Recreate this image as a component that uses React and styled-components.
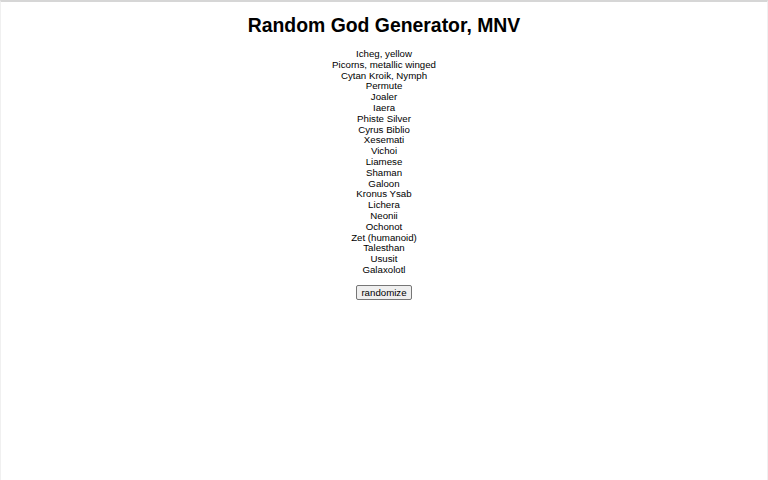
import React, { useState } from "react";
import styled, { createGlobalStyle } from "styled-components";

const GlobalStyle = createGlobalStyle`
  html, body {
    margin: 0;
    padding: 0;
    background: #ffffff;
  }
  body {
    font-family: "Liberation Sans", Arial, sans-serif;
    color: #000000;
  }
`;

const GODS = [
  "Icheg, yellow",
  "Picorns, metallic winged",
  "Cytan Kroik, Nymph",
  "Permute",
  "Joaler",
  "Iaera",
  "Phiste Silver",
  "Cyrus Biblio",
  "Xesemati",
  "Vichoi",
  "Liamese",
  "Shaman",
  "Galoon",
  "Kronus Ysab",
  "Lichera",
  "Neonii",
  "Ochonot",
  "Zet (humanoid)",
  "Talesthan",
  "Ususit",
  "Galaxolotl",
];

const App = () => {
  const [gods, setGods] = useState(GODS);

  const randomize = () => {
    setGods([...gods].sort(() => Math.random() - 0.5));
  };

  return (
    <>
      <GlobalStyle />
      <Frame>
        <Title>Random God Generator, MNV</Title>
        <GodList>
          {gods.map((g) => (
            <GodItem key={g}>{g}</GodItem>
          ))}
        </GodList>
        <RandomButton onClick={randomize}>randomize</RandomButton>
      </Frame>
    </>
  );
};

const Frame = styled.div`
  box-sizing: border-box;
  min-height: 100vh;
  border-top: 2px solid #d6d6d6;
  border-left: 1px solid #f0f0f0;
  border-right: 1px solid #f0f0f0;
  display: flex;
  flex-direction: column;
  align-items: center;
  padding-top: 12px;
`;

const Title = styled.h1`
  margin: 0;
  font-size: 19.4px;
  line-height: 22px;
  font-weight: 700;
`;

const GodList = styled.div`
  margin-top: 13px;
  display: flex;
  flex-direction: column;
  align-items: center;
`;

const GodItem = styled.div`
  font-size: 9.7px;
  line-height: 10.8px;
`;

const RandomButton = styled.button`
  margin-top: 9px;
  font-family: "Liberation Sans", Arial, sans-serif;
  font-size: 9.7px;
  line-height: 11px;
  padding: 1px 4px;
  color: #000000;
  background: #efefef;
  border: 1px solid #767676;
  border-radius: 2px;
  cursor: pointer;
`;

export default App;
